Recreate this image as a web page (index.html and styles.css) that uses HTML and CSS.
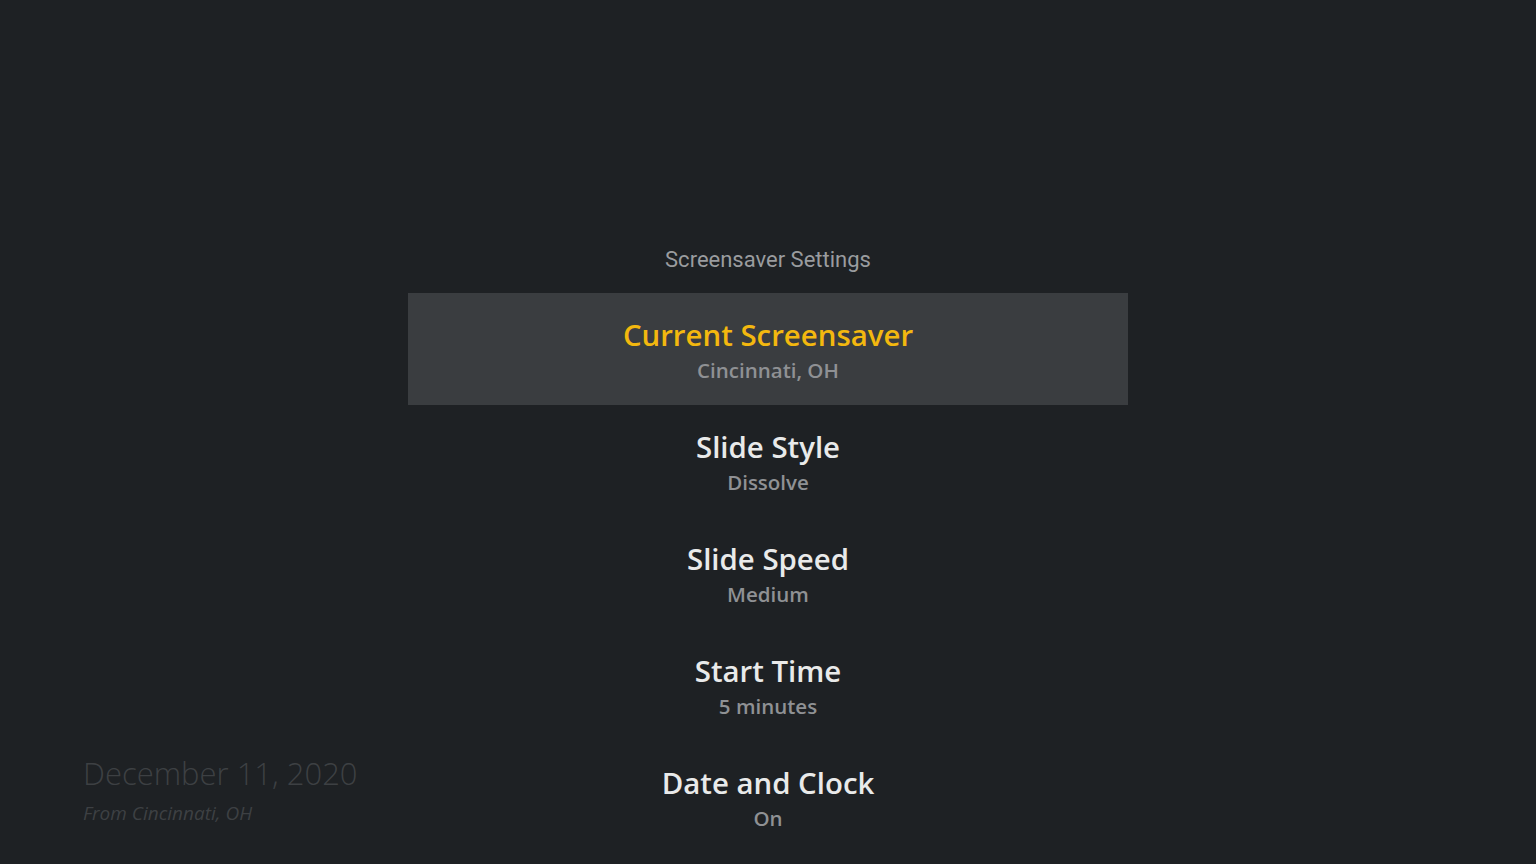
FILE: index.html
```html
<!DOCTYPE html>
<html lang="en">
<head>
    <meta charset="UTF-8">
    <title>Screensaver Settings</title>
    <link rel="stylesheet" href="styles.css">
</head>
<body>
    <div class="screen">
        <div class="side">
            <div class="date">December 11, 2020</div>
            <div class="source">From Cincinnati, OH</div>
        </div>

        <div class="settings">
            <h2 class="settings-title">Screensaver Settings</h2>
            <ul class="menu">
                <li class="menu-item selected">
                    <div class="item-name">Current Screensaver</div>
                    <div class="item-value">Cincinnati, OH</div>
                </li>
                <li class="menu-item">
                    <div class="item-name">Slide Style</div>
                    <div class="item-value">Dissolve</div>
                </li>
                <li class="menu-item">
                    <div class="item-name">Slide Speed</div>
                    <div class="item-value">Medium</div>
                </li>
                <li class="menu-item">
                    <div class="item-name">Start Time</div>
                    <div class="item-value">5 minutes</div>
                </li>
                <li class="menu-item">
                    <div class="item-name">Date and Clock</div>
                    <div class="item-value">On</div>
                </li>
            </ul>
        </div>

        <div class="side"></div>
    </div>
</body>
</html>
```

FILE: styles.css
```css
* {
    margin: 0;
    padding: 0;
    box-sizing: border-box;
}

body {
    background: #1e2124;
    font-family: 'Open Sans', 'Noto Sans', sans-serif;
    height: 100vh;
    overflow: hidden;
}

.screen {
    display: grid;
    grid-template-columns: 1fr 720px 1fr;
    height: 100vh;
}

.side {
    display: flex;
    flex-direction: column;
    justify-content: flex-end;
    padding: 0 0 38px 83px;
}

.date {
    color: #3d4043;
    font-size: 31px;
    font-weight: 300;
    line-height: 40px;
}

.source {
    color: #3d4043;
    font-size: 19px;
    font-style: italic;
    line-height: 26px;
    margin-top: 7px;
}

.settings {
    padding-top: 246px;
}

.settings-title {
    color: #9a9c9f;
    font-family: Roboto, 'Noto Sans', sans-serif;
    font-size: 22px;
    font-weight: 400;
    line-height: 28px;
    text-align: center;
    margin-bottom: 19px;
}

.menu {
    list-style: none;
}

.menu-item {
    height: 112px;
    padding-top: 24px;
    text-align: center;
}

.menu-item.selected {
    background: #3a3d40;
}

.item-name {
    color: #e9eaea;
    font-size: 29.4px;
    font-weight: 600;
    line-height: 36px;
}

.selected .item-name {
    color: #f3b80f;
}

.item-value {
    color: #8f9194;
    font-size: 20.5px;
    font-weight: 600;
    line-height: 26px;
    margin-top: 4px;
}
```
